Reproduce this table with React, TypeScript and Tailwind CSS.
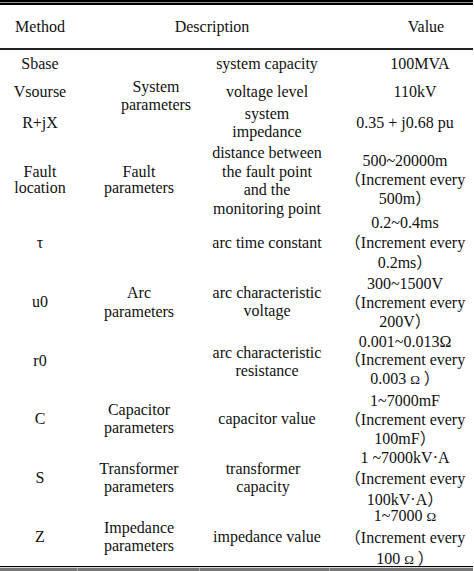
import type { ReactNode } from "react";
import clsx from "clsx";

type CellProps = {
  children: ReactNode;
  className?: string;
};

function Cell({ children, className }: CellProps) {
  return (
    <div
      className={clsx(
        "flex flex-col items-center justify-center text-center whitespace-nowrap",
        className
      )}
    >
      {children}
    </div>
  );
}

function Lines({ lines, className }: { lines: ReactNode[]; className?: string }) {
  return (
    <div className={clsx("flex flex-col items-center", className)}>
      {lines.map((l, i) => (
        <span key={i}>{l}</span>
      ))}
    </div>
  );
}

// the small ohm sign used in a few of the value cells
const Ohm = () => <span className="text-[13px]">Ω</span>;

export default function App() {
  return (
    <div className="w-[474px] h-[571px] overflow-hidden bg-white font-['Liberation_Serif','Noto_Sans_CJK_SC',serif] text-[16px] text-[#111]">
      {/* top double rule */}
      <div className="w-[473px] h-[2px] bg-black" />
      <div className="w-[473px] h-px bg-[#9a9a9a]" />
      <div className="w-[473px] h-[2px] bg-black" />

      {/* header */}
      <div className="grid grid-cols-[80px_256px_138px] h-[43px] items-center">
        <Cell>Method</Cell>
        <Cell className="pl-[8px]">Description</Cell>
        <Cell className="pl-[42px]">Value</Cell>
      </div>
      <div className="w-[473px] h-[2px] bg-[#222]" />

      {/* body */}
      <div className="grid grid-cols-[80px_118px_138px_138px] grid-rows-[28px_28px_34px_74px_58px_60px_58px_58px_60px_58px] leading-[18px]">
        {/* column 1 */}
        <Cell className="col-start-1 row-start-1">Sbase</Cell>
        <Cell className="col-start-1 row-start-2">Vsourse</Cell>
        <Cell className="col-start-1 row-start-3">R+jX</Cell>
        <Cell className="col-start-1 row-start-4 pt-[6px] leading-[16px]">
          <Lines lines={["Fault", "location"]} />
        </Cell>
        <Cell className="col-start-1 row-start-5">τ</Cell>
        <Cell className="col-start-1 row-start-6">u0</Cell>
        <Cell className="col-start-1 row-start-7">r0</Cell>
        <Cell className="col-start-1 row-start-8">C</Cell>
        <Cell className="col-start-1 row-start-9">S</Cell>
        <Cell className="col-start-1 row-start-10">Z</Cell>

        {/* column 2 */}
        <Cell className="col-start-2 row-start-1 row-span-3 pl-[34px] pt-[2px]">
          <Lines lines={["System", "parameters"]} />
        </Cell>
        <Cell className="col-start-2 row-start-4 pt-[6px] leading-[16px]">
          <Lines lines={["Fault", "parameters"]} />
        </Cell>
        <Cell className="col-start-2 row-start-5 row-span-3">
          <Lines lines={["Arc", "parameters"]} className="leading-[19px]" />
        </Cell>
        <Cell className="col-start-2 row-start-8">
          <Lines lines={["Capacitor", "parameters"]} />
        </Cell>
        <Cell className="col-start-2 row-start-9">
          <Lines lines={["Transformer", "parameters"]} />
        </Cell>
        <Cell className="col-start-2 row-start-10">
          <Lines lines={["Impedance", "parameters"]} />
        </Cell>

        {/* column 3 */}
        <Cell className="col-start-3 row-start-1">system capacity</Cell>
        <Cell className="col-start-3 row-start-2">voltage level</Cell>
        <Cell className="col-start-3 row-start-3">
          <Lines lines={["system", "impedance"]} />
        </Cell>
        <Cell className="col-start-3 row-start-4 pt-[8px] leading-[18.5px]">
          <Lines
            lines={[
              "distance between",
              "the fault point",
              "and the",
              "monitoring point",
            ]}
          />
        </Cell>
        <Cell className="col-start-3 row-start-5">arc time constant</Cell>
        <Cell className="col-start-3 row-start-6">
          <Lines lines={["arc characteristic", "voltage"]} />
        </Cell>
        <Cell className="col-start-3 row-start-7 pt-[2px]">
          <Lines lines={["arc characteristic", "resistance"]} />
        </Cell>
        <Cell className="col-start-3 row-start-8">capacitor value</Cell>
        <Cell className="col-start-3 row-start-9 pr-[8px]">
          <Lines lines={["transformer", "capacity"]} />
        </Cell>
        <Cell className="col-start-3 row-start-10">impedance value</Cell>

        {/* column 4 */}
        <Cell className="col-start-4 row-start-1 pl-[30px]">100MVA</Cell>
        <Cell className="col-start-4 row-start-2 pl-[20px]">110kV</Cell>
        <Cell className="col-start-4 row-start-3">0.35 + j0.68 pu</Cell>
        <Cell className="col-start-4 row-start-4 pt-[4px] leading-[19px]">
          <Lines lines={["500~20000m", "（Increment every", "500m）"]} />
        </Cell>
        <Cell className="col-start-4 row-start-5 leading-[20px]">
          <Lines lines={["0.2~0.4ms", "（Increment every", "0.2ms）"]} />
        </Cell>
        <Cell className="col-start-4 row-start-6 leading-[19px]">
          <Lines lines={["300~1500V", "（Increment every", "200V）"]} />
        </Cell>
        <Cell className="col-start-4 row-start-7 leading-[18.5px]">
          <Lines
            lines={[
              "0.001~0.013Ω",
              "（Increment every",
              <>
                0.003 <Ohm /> ）
              </>,
            ]}
          />
        </Cell>
        <Cell className="col-start-4 row-start-8 leading-[19px]">
          <Lines lines={["1~7000mF", "（Increment every", "100mF）"]} />
        </Cell>
        <Cell className="col-start-4 row-start-9 leading-[21px]">
          <Lines lines={["1 ~7000kV·A", "（Increment every", "100kV·A）"]} />
        </Cell>
        <Cell className="col-start-4 row-start-10 leading-[21px]">
          <Lines
            lines={[
              <>
                1~7000 <Ohm />
              </>,
              "（Increment every",
              <>
                100 <Ohm /> ）
              </>,
            ]}
          />
        </Cell>
      </div>

      {/* bottom rule */}
      <div className="w-[473px] h-px bg-black" />
      <div className="w-[473px] h-px bg-[#d8d8d8]" />
      <div className="flex w-[473px] h-[3px] bg-[#777] divide-x divide-[#a8a8a8]">
        <div className="w-[78px]" />
        <div className="w-[122px]" />
        <div className="w-[130px]" />
        <div className="flex-1" />
      </div>
    </div>
  );
}
